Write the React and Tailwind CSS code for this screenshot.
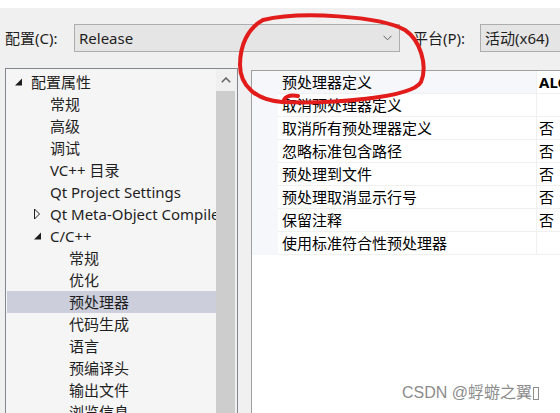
import React from "react";

const tree = [
  { label: "配置属性", level: 0, icon: "open" },
  { label: "常规", level: 1 },
  { label: "高级", level: 1 },
  { label: "调试", level: 1 },
  { label: "VC++ 目录", level: 1 },
  { label: "Qt Project Settings", level: 1 },
  { label: "Qt Meta-Object Compiler", level: 1, icon: "closed" },
  { label: "C/C++", level: 1, icon: "open" },
  { label: "常规", level: 2 },
  { label: "优化", level: 2 },
  { label: "预处理器", level: 2, selected: true },
  { label: "代码生成", level: 2 },
  { label: "语言", level: 2 },
  { label: "预编译头", level: 2 },
  { label: "输出文件", level: 2 },
  { label: "浏览信息", level: 2 },
];

const props = [
  { name: "预处理器定义", value: "ALC", bold: true, first: true },
  { name: "取消预处理器定义", value: "" },
  { name: "取消所有预处理器定义", value: "否" },
  { name: "忽略标准包含路径", value: "否" },
  { name: "预处理到文件", value: "否" },
  { name: "预处理取消显示行号", value: "否" },
  { name: "保留注释", value: "否" },
  { name: "使用标准符合性预处理器", value: "" },
];

const indent = ["pl-[8px]", "pl-[27px]", "pl-[46px]"];

const TreeIcon = ({ type }) => {
  if (type === "open")
    return (
      <svg className="shrink-0" width="16" height="10" viewBox="0 0 16 10">
        <polygon points="0,8.5 7,8.5 7,1.5" fill="#1e1e1e" />
      </svg>
    );
  if (type === "closed")
    return (
      <svg className="shrink-0" width="16" height="12" viewBox="0 0 16 12">
        <polygon points="0.5,1 5.5,6 0.5,11" fill="none" stroke="#1e1e1e" strokeWidth="1" />
      </svg>
    );
  return <span className="w-[16px] shrink-0" />;
};

const App = () => {
  return (
    <div
      className="relative w-[560px] h-[413px] overflow-hidden bg-[#f0f0f0] text-[#1e1e1e]"
      style={{ fontFamily: '"Noto Sans", "Noto Sans CJK SC", sans-serif' }}
    >
      <div className="h-[8px] bg-white" />

      {/* header */}
      <div className="flex items-center mt-[16px] h-[28px] text-[15px] leading-none">
        <span className="pl-[5px] w-[74px] shrink-0 whitespace-nowrap">配置(C):</span>
        <div className="flex shrink-0 items-center justify-between w-[326px] h-[28px] bg-[#e5e5e5] border border-[#adadad] pl-[4px] pr-[7px]">
          <span>Release</span>
          <svg width="9" height="6" viewBox="0 0 9 6">
            <polyline points="0.5,0.8 4.5,4.8 8.5,0.8" fill="none" stroke="#606060" strokeWidth="1" />
          </svg>
        </div>
        <span className="ml-[13px] w-[67px] shrink-0 whitespace-nowrap">平台(P):</span>
        <div className="flex shrink-0 items-center w-[120px] h-[28px] bg-[#e5e5e5] border border-[#adadad] pl-[4px]">
          <span className="whitespace-nowrap">活动(x64)</span>
        </div>
      </div>

      {/* panels */}
      <div className="flex mt-[16px]">
        {/* tree */}
        <div className="ml-[5px] w-[233px] shrink-0 h-[400px] border border-[#828790] bg-[#f5f5f5] flex">
          <div className="w-[209px] shrink-0 ml-[1px] pt-[2px] overflow-hidden">
            {tree.map((t, i) => (
              <div
                key={i}
                className={`flex items-center h-[22px] text-[15px] whitespace-nowrap ${indent[t.level]} ${
                  t.selected ? "bg-[#cccedb]" : ""
                }`}
              >
                <TreeIcon type={t.icon} />
                <span className="leading-none">{t.label}</span>
              </div>
            ))}
          </div>
          <div className="w-[21px] shrink-0 flex flex-col bg-[#f0f0f0]">
            <div className="h-[22px] flex items-center justify-center pr-[2px]">
              <svg width="10" height="6" viewBox="0 0 10 6">
                <polyline points="0.8,5.2 5,1 9.2,5.2" fill="none" stroke="#606060" strokeWidth="1.5" />
              </svg>
            </div>
            <div className="flex-1 w-[19px] bg-[#cdcdcd]" />
          </div>
        </div>

        {/* property grid */}
        <div className="ml-[13px] mt-[2px] w-[400px] shrink-0 h-[400px] border-l border-t border-[#a0a0a0] bg-white text-[15px] text-black">
          {props.map((p, i) => (
            <div key={i} className="flex h-[23px]">
              <div className="w-[26px] shrink-0 bg-[#f5f7fb]" />
              <div
                className={`w-[258px] shrink-0 flex items-center pl-[4px] border-b border-[#f0f0f0] whitespace-nowrap ${
                  p.first ? "bg-[#f5f7fb]" : ""
                }`}
              >
                <span className="leading-none">{p.name}</span>
              </div>
              <div className="flex-1 flex items-center pl-[2px] border-l border-b border-[#f0f0f0]">
                <span className={`leading-none ${p.bold ? "font-bold" : ""}`}>{p.value}</span>
              </div>
            </div>
          ))}
        </div>
      </div>

      {/* watermark */}
      <div
        className="absolute left-[402px] top-[385px] flex items-center text-[16px] leading-none text-[#8c8c8c]"
        style={{ fontFamily: '"Liberation Sans", "Noto Sans CJK SC", sans-serif', textShadow: "0 0 2px #fff" }}
      >
        <span>CSDN @蜉蝣之翼</span>
        <span className="ml-[1px] w-[6px] h-[13px] border border-[#8c8c8c]" />
      </div>

      {/* red hand-drawn annotation */}
      <svg className="absolute left-0 top-0 pointer-events-none" width="560" height="413" viewBox="0 0 560 413">
        <path
          d="M263 20 C300 11 380 16 405 30 C420 40 428 65 421 82 C412 98 330 104 282 102 C256 100 240 86 240 65 C240 45 248 28 263 20"
          fill="none"
          stroke="#e21b1b"
          strokeWidth="4"
          strokeLinecap="round"
        />
        <path d="M284 100 C286 96 292 95 298 96" fill="none" stroke="#e21b1b" strokeWidth="4" strokeLinecap="round" />
      </svg>
    </div>
  );
};

export default App;
